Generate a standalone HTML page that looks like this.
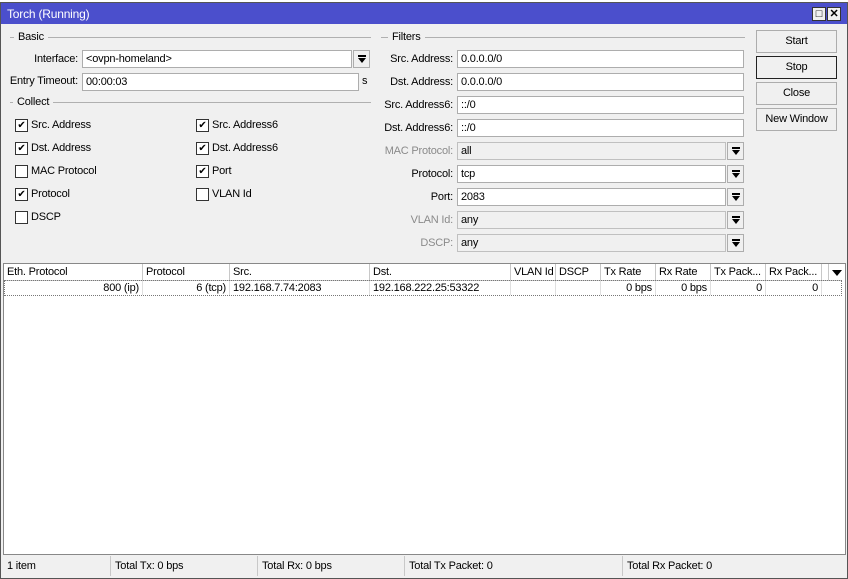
<!DOCTYPE html>
<html><head><meta charset="utf-8"><style>
*{box-sizing:border-box;margin:0;padding:0}
body{width:848px;height:579px;background:#fff;font-family:"Liberation Sans",Arial,sans-serif;font-size:11px;letter-spacing:-0.2px;color:#000;position:relative;overflow:hidden}
.a{position:absolute}
#win{left:0;top:2px;width:848px;height:577px;background:#f0f0f0;border:1px solid #555}
#title{left:1px;top:3px;width:846px;height:21px;background:#4b4fcc;color:#fff;font-size:12px;line-height:22px;padding-left:6px}
.tb{top:7px;width:14px;height:14px;background:#f0f0f0;border:1px solid #333;font-size:11px;line-height:12px;text-align:center;font-weight:bold}
.grp{height:1px;background:#b0b0b0}
.gl{background:#f0f0f0;padding:0 4px;line-height:14px}
.lbl{text-align:right;line-height:17px}
.in{height:18px;background:#fff;border:1px solid #adadad;line-height:16px;padding-left:3px}
.dis{background:#f0f0f0;border-color:#c0c0c0}
.dd{width:17px;height:18px;border:1px solid #adadad;background:#f0f0f0}
.dd:after{content:"";position:absolute;left:4px;top:7px;width:0;height:0;border-left:4px solid transparent;border-right:4px solid transparent;border-top:5px solid #000}
.dd:before{content:"";position:absolute;left:4px;top:4px;width:8px;height:2px;background:#000}
.gray{color:#8a8a8a}
.cb{width:13px;height:13px;border:1px solid #333;background:#fff;font-size:10px;line-height:11px;text-align:center}
.btn{left:756px;width:81px;height:23px;border:1px solid #adadad;background:#f0f0f0;text-align:center;line-height:21px}
.th{top:264px;height:17px;border-right:1px solid #c8c8c8;padding-left:3px;line-height:16px;background:#fff;white-space:nowrap;overflow:hidden}
.td{top:281px;height:14px;line-height:14px;white-space:nowrap;padding:0 3px;border-right:1px solid #e0e0e0}
.sb{top:556px;height:20px;line-height:20px;padding-left:4px;border-left:1px solid #c8c8c8}
</style></head><body>
<div class="a" id="win"></div>
<div class="a" id="title">Torch (Running)</div>
<div class="a tb" style="left:812px">□</div>
<div class="a tb" style="left:827px">✕</div>

<div class="a grp" style="left:10px;top:37px;width:361px"></div>
<div class="a gl" style="left:14px;top:30px">Basic</div>
<div class="a lbl" style="left:0;top:51px;width:78px">Interface:</div>
<div class="a in" style="left:82px;top:50px;width:270px">&lt;ovpn-homeland&gt;</div>
<div class="a dd" style="left:353px;top:50px"></div>
<div class="a lbl" style="left:0;top:73px;width:78px">Entry Timeout:</div>
<div class="a in" style="left:82px;top:73px;width:277px">00:00:03</div>
<div class="a" style="left:362px;top:75px">s</div>
<div class="a grp" style="left:10px;top:102px;width:361px"></div>
<div class="a gl" style="left:13px;top:95px">Collect</div>

<div class="a cb" style="left:15px;top:119px">✔</div><div class="a" style="left:31px;top:119px">Src. Address</div>
<div class="a cb" style="left:15px;top:142px">✔</div><div class="a" style="left:31px;top:142px">Dst. Address</div>
<div class="a cb" style="left:15px;top:165px"></div><div class="a" style="left:31px;top:165px">MAC Protocol</div>
<div class="a cb" style="left:15px;top:188px">✔</div><div class="a" style="left:31px;top:188px">Protocol</div>
<div class="a cb" style="left:15px;top:211px"></div><div class="a" style="left:31px;top:211px">DSCP</div>
<div class="a cb" style="left:196px;top:119px">✔</div><div class="a" style="left:212px;top:119px">Src. Address6</div>
<div class="a cb" style="left:196px;top:142px">✔</div><div class="a" style="left:212px;top:142px">Dst. Address6</div>
<div class="a cb" style="left:196px;top:165px">✔</div><div class="a" style="left:212px;top:165px">Port</div>
<div class="a cb" style="left:196px;top:188px"></div><div class="a" style="left:212px;top:188px">VLAN Id</div>

<div class="a grp" style="left:381px;top:37px;width:364px"></div>
<div class="a gl" style="left:388px;top:30px">Filters</div>
<div class="a lbl" style="left:340px;top:51px;width:113px">Src. Address:</div><div class="a in" style="left:457px;top:50px;width:287px">0.0.0.0/0</div>
<div class="a lbl" style="left:340px;top:74px;width:113px">Dst. Address:</div><div class="a in" style="left:457px;top:73px;width:287px">0.0.0.0/0</div>
<div class="a lbl" style="left:340px;top:97px;width:113px">Src. Address6:</div><div class="a in" style="left:457px;top:96px;width:287px">::/0</div>
<div class="a lbl" style="left:340px;top:120px;width:113px">Dst. Address6:</div><div class="a in" style="left:457px;top:119px;width:287px">::/0</div>
<div class="a lbl gray" style="left:340px;top:143px;width:113px">MAC Protocol:</div><div class="a in dis" style="left:457px;top:142px;width:269px">all</div><div class="a dd" style="left:727px;top:142px"></div>
<div class="a lbl" style="left:340px;top:166px;width:113px">Protocol:</div><div class="a in" style="left:457px;top:165px;width:269px">tcp</div><div class="a dd" style="left:727px;top:165px"></div>
<div class="a lbl" style="left:340px;top:189px;width:113px">Port:</div><div class="a in" style="left:457px;top:188px;width:269px">2083</div><div class="a dd" style="left:727px;top:188px"></div>
<div class="a lbl gray" style="left:340px;top:212px;width:113px">VLAN Id:</div><div class="a in dis" style="left:457px;top:211px;width:269px">any</div><div class="a dd" style="left:727px;top:211px"></div>
<div class="a lbl gray" style="left:340px;top:235px;width:113px">DSCP:</div><div class="a in dis" style="left:457px;top:234px;width:269px">any</div><div class="a dd" style="left:727px;top:234px"></div>

<div class="a btn" style="top:30px">Start</div>
<div class="a btn" style="top:56px;border:1px solid #222">Stop</div>
<div class="a btn" style="top:82px">Close</div>
<div class="a btn" style="top:108px">New Window</div>

<div class="a" style="left:3px;top:263px;width:843px;height:292px;background:#fff;border:1px solid #888"></div>
<div class="a th" style="left:4px;width:139px">Eth. Protocol</div>
<div class="a th" style="left:143px;width:87px">Protocol</div>
<div class="a th" style="left:230px;width:140px">Src.</div>
<div class="a th" style="left:370px;width:141px">Dst.</div>
<div class="a th" style="left:511px;width:45px">VLAN Id</div>
<div class="a th" style="left:556px;width:45px">DSCP</div>
<div class="a th" style="left:601px;width:55px">Tx Rate</div>
<div class="a th" style="left:656px;width:55px">Rx Rate</div>
<div class="a th" style="left:711px;width:55px">Tx Pack...</div>
<div class="a th" style="left:766px;width:56px">Rx Pack...</div>
<div class="a th" style="left:822px;width:7px"></div>
<div class="a" style="left:832px;top:270px;width:0;height:0;border-left:5px solid transparent;border-right:5px solid transparent;border-top:6px solid #000"></div>
<div class="a" style="left:4px;top:280px;width:838px;height:1px;background:#c8c8c8"></div>
<div class="a" style="left:4px;top:280px;width:838px;height:16px;border:1px dotted #777"></div>
<div class="a td" style="left:4px;width:139px;text-align:right">800 (ip)</div>
<div class="a td" style="left:143px;width:87px;text-align:right">6 (tcp)</div>
<div class="a td" style="left:230px;width:140px">192.168.7.74:2083</div>
<div class="a td" style="left:370px;width:141px">192.168.222.25:53322</div>
<div class="a td" style="left:511px;width:45px"></div>
<div class="a td" style="left:556px;width:45px"></div>
<div class="a td" style="left:601px;width:55px;text-align:right">0 bps</div>
<div class="a td" style="left:656px;width:55px;text-align:right">0 bps</div>
<div class="a td" style="left:711px;width:55px;text-align:right">0</div>
<div class="a td" style="left:766px;width:56px;text-align:right">0</div>

<div class="a sb" style="left:3px;width:107px;border-left:none">1 item</div>
<div class="a sb" style="left:110px;width:147px">Total Tx: 0 bps</div>
<div class="a sb" style="left:257px;width:147px">Total Rx: 0 bps</div>
<div class="a sb" style="left:404px;width:218px">Total Tx Packet: 0</div>
<div class="a sb" style="left:622px;width:224px">Total Rx Packet: 0</div>
</body></html>
